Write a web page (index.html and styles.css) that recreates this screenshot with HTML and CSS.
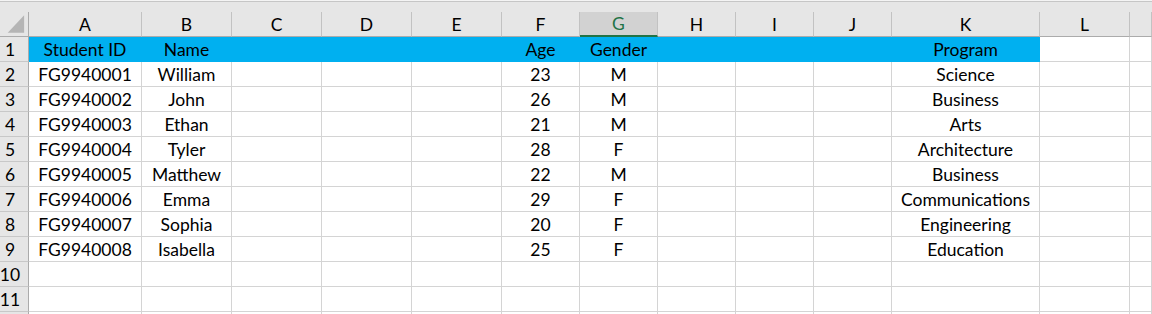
FILE: index.html
```html
<!DOCTYPE html>
<html lang="en">
<head>
    <meta charset="UTF-8">
    <meta name="viewport" content="width=device-width, initial-scale=1.0">
    <title>Students</title>
    <link rel="stylesheet" href="styles.css">
</head>
<body>
    <div class="sheet">
        <div class="top-strip"></div>

        <div class="row col-head">
            <div class="corner">
                <svg width="29" height="24" viewBox="0 0 29 24">
                    <polygon points="25,3 25,21 8,21" fill="#b5b5b5"/>
                </svg>
            </div>
            <div class="ch">A</div>
            <div class="ch">B</div>
            <div class="ch">C</div>
            <div class="ch">D</div>
            <div class="ch">E</div>
            <div class="ch">F</div>
            <div class="ch selected">G</div>
            <div class="ch">H</div>
            <div class="ch">I</div>
            <div class="ch">J</div>
            <div class="ch">K</div>
            <div class="ch">L</div>
            <div class="ch"></div>
        </div>

        <div class="row">
            <div class="rh">1</div>
            <div class="c fill">Student ID</div>
            <div class="c fill">Name</div>
            <div class="c fill"></div>
            <div class="c fill"></div>
            <div class="c fill"></div>
            <div class="c fill">Age</div>
            <div class="c fill">Gender</div>
            <div class="c fill"></div>
            <div class="c fill"></div>
            <div class="c fill"></div>
            <div class="c fill">Program</div>
            <div class="c"></div>
            <div class="c"></div>
        </div>

        <div class="row">
            <div class="rh">2</div>
            <div class="c">FG9940001</div>
            <div class="c">William</div>
            <div class="c"></div><div class="c"></div><div class="c"></div>
            <div class="c">23</div>
            <div class="c">M</div>
            <div class="c"></div><div class="c"></div><div class="c"></div>
            <div class="c">Science</div>
            <div class="c"></div><div class="c"></div>
        </div>

        <div class="row">
            <div class="rh">3</div>
            <div class="c">FG9940002</div>
            <div class="c">John</div>
            <div class="c"></div><div class="c"></div><div class="c"></div>
            <div class="c">26</div>
            <div class="c">M</div>
            <div class="c"></div><div class="c"></div><div class="c"></div>
            <div class="c">Business</div>
            <div class="c"></div><div class="c"></div>
        </div>

        <div class="row">
            <div class="rh">4</div>
            <div class="c">FG9940003</div>
            <div class="c">Ethan</div>
            <div class="c"></div><div class="c"></div><div class="c"></div>
            <div class="c">21</div>
            <div class="c">M</div>
            <div class="c"></div><div class="c"></div><div class="c"></div>
            <div class="c">Arts</div>
            <div class="c"></div><div class="c"></div>
        </div>

        <div class="row">
            <div class="rh">5</div>
            <div class="c">FG9940004</div>
            <div class="c">Tyler</div>
            <div class="c"></div><div class="c"></div><div class="c"></div>
            <div class="c">28</div>
            <div class="c">F</div>
            <div class="c"></div><div class="c"></div><div class="c"></div>
            <div class="c">Architecture</div>
            <div class="c"></div><div class="c"></div>
        </div>

        <div class="row">
            <div class="rh">6</div>
            <div class="c">FG9940005</div>
            <div class="c">Matthew</div>
            <div class="c"></div><div class="c"></div><div class="c"></div>
            <div class="c">22</div>
            <div class="c">M</div>
            <div class="c"></div><div class="c"></div><div class="c"></div>
            <div class="c">Business</div>
            <div class="c"></div><div class="c"></div>
        </div>

        <div class="row">
            <div class="rh">7</div>
            <div class="c">FG9940006</div>
            <div class="c">Emma</div>
            <div class="c"></div><div class="c"></div><div class="c"></div>
            <div class="c">29</div>
            <div class="c">F</div>
            <div class="c"></div><div class="c"></div><div class="c"></div>
            <div class="c">Communications</div>
            <div class="c"></div><div class="c"></div>
        </div>

        <div class="row">
            <div class="rh">8</div>
            <div class="c">FG9940007</div>
            <div class="c">Sophia</div>
            <div class="c"></div><div class="c"></div><div class="c"></div>
            <div class="c">20</div>
            <div class="c">F</div>
            <div class="c"></div><div class="c"></div><div class="c"></div>
            <div class="c">Engineering</div>
            <div class="c"></div><div class="c"></div>
        </div>

        <div class="row">
            <div class="rh">9</div>
            <div class="c">FG9940008</div>
            <div class="c">Isabella</div>
            <div class="c"></div><div class="c"></div><div class="c"></div>
            <div class="c">25</div>
            <div class="c">F</div>
            <div class="c"></div><div class="c"></div><div class="c"></div>
            <div class="c">Education</div>
            <div class="c"></div><div class="c"></div>
        </div>

        <div class="row">
            <div class="rh">10</div>
            <div class="c"></div><div class="c"></div><div class="c"></div><div class="c"></div>
            <div class="c"></div><div class="c"></div><div class="c"></div><div class="c"></div>
            <div class="c"></div><div class="c"></div><div class="c"></div><div class="c"></div>
            <div class="c"></div>
        </div>

        <div class="row">
            <div class="rh">11</div>
            <div class="c"></div><div class="c"></div><div class="c"></div><div class="c"></div>
            <div class="c"></div><div class="c"></div><div class="c"></div><div class="c"></div>
            <div class="c"></div><div class="c"></div><div class="c"></div><div class="c"></div>
            <div class="c"></div>
        </div>

        <div class="row">
            <div class="rh"></div>
            <div class="c"></div><div class="c"></div><div class="c"></div><div class="c"></div>
            <div class="c"></div><div class="c"></div><div class="c"></div><div class="c"></div>
            <div class="c"></div><div class="c"></div><div class="c"></div><div class="c"></div>
            <div class="c"></div>
        </div>
    </div>
</body>
</html>
```

FILE: styles.css
```css
body {
    margin: 0;
    background: #fff;
    font-family: Lato, "Open Sans", sans-serif;
    font-size: 17.5px;
    color: #000;
    overflow: hidden;
}

.sheet {
    width: 1152px;
    height: 314px;
    overflow: hidden;
}

.top-strip {
    height: 1px;
    background: #f4f4f4;
    border-bottom: 1px solid #c6c6c6;
}

.row {
    display: grid;
    grid-template-columns: 29px 113px 90px 90px 90px 90px 78px 78px 78px 78px 78px 148px 90px 1fr;
}

.row > div {
    box-sizing: border-box;
    height: 25px;
    border-right: 1px solid #d4d4d4;
    border-bottom: 1px solid #d4d4d4;
    display: flex;
    align-items: flex-end;
    justify-content: center;
    padding-bottom: 1px;
    white-space: nowrap;
}

.col-head {
    background: #e6e6e6;
    padding-top: 10px;
}

.col-head > div {
    border-right-color: #c2c2c2;
    border-bottom-color: #ababab;
    align-items: center;
    padding-bottom: 0;
}

.col-head .corner {
    border-right-color: #ababab;
    padding: 0;
}

.col-head .corner svg {
    display: block;
}

.col-head .selected {
    background: #d2d2d2;
    color: #217346;
    border-bottom: 2px solid #217346;
}

.rh {
    background: #e6e6e6;
    border-right-color: #ababab !important;
    border-bottom-color: #c8c8c8 !important;
    padding-right: 8px;
}

.fill {
    background: #00b0f0;
    border-right-color: #00b0f0 !important;
    border-bottom-color: #00b0f0 !important;
}
```
